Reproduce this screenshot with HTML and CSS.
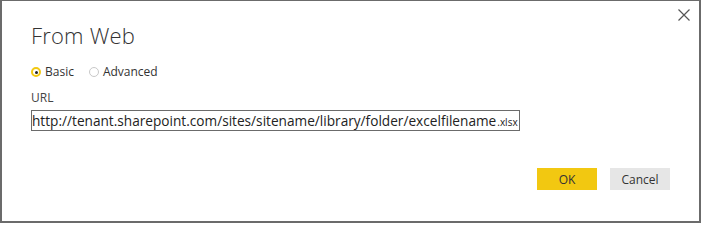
FILE: index.html
```html
<!DOCTYPE html>
<html lang="en">
<head>
<meta charset="utf-8">
<title>From Web</title>
<link rel="stylesheet" href="styles.css">
</head>
<body>
<div class="dialog">
  <button class="close" aria-label="Close">
    <svg width="12" height="12" viewBox="0 0 12 12"><path d="M0.5 0.5 L11.5 11.5 M11.5 0.5 L0.5 11.5" stroke="#555" stroke-width="1.2" fill="none"/></svg>
  </button>
  <h1 class="title">From Web</h1>
  <div class="radios">
    <label class="radio"><span class="dot checked"></span>Basic</label>
    <label class="radio"><span class="dot"></span>Advanced</label>
  </div>
  <div class="label">URL</div>
  <div class="input">http://tenant.sharepoint.com/sites/sitename/library/folder/excelfilename<span class="ext">.xlsx</span></div>
  <div class="actions">
    <button class="btn ok">OK</button>
    <button class="btn cancel">Cancel</button>
  </div>
</div>
</body>
</html>
```
FILE: styles.css
```css
html, body {
  margin: 0;
  padding: 0;
  background: #fff;
}
body {
  width: 701px;
  height: 223px;
  font-family: "Open Sans", "Noto Sans", sans-serif;
  color: #333;
}
.dialog {
  position: relative;
  box-sizing: border-box;
  width: 701px;
  height: 223px;
  border: 2px solid #6b6b6b;
  border-top-width: 1px;
  padding: 19px 29px 0 29px;
}
.close {
  position: absolute;
  top: 8px;
  right: 9px;
  border: 0;
  background: none;
  padding: 0;
  width: 12px;
  height: 12px;
  display: flex;
}
.title {
  margin: 0;
  font-weight: 300;
  font-size: 22px;
  line-height: 30px;
  color: #333;
  letter-spacing: 0.2px;
}
.radios {
  display: flex;
  gap: 15px;
  margin-top: 14px;
  font-size: 12px;
  line-height: 16px;
  color: #333;
}
.radio {
  display: flex;
  align-items: center;
  gap: 4px;
}
.dot {
  box-sizing: border-box;
  width: 10px;
  height: 10px;
  border-radius: 50%;
  border: 1px solid #c8c8c8;
  display: inline-flex;
  align-items: center;
  justify-content: center;
}
.dot.checked {
  border: 2px solid #f2c811;
}
.dot.checked::after {
  content: "";
  width: 3px;
  height: 3px;
  border-radius: 50%;
  background: #222;
}
.label {
  margin-top: 11px;
  font-size: 12px;
  line-height: 14px;
  color: #444;
}
.input {
  box-sizing: border-box;
  width: 489px;
  height: 21px;
  margin-top: 5px;
  border: 1px solid #6b6b6b;
  padding: 0 2px 0 0;
  font-size: 13.65px;
  line-height: 19px;
  color: #222;
  white-space: nowrap;
  overflow: hidden;
}
.ext {
  font-size: 10px;
  margin-left: 1px;
}
.actions {
  display: flex;
  justify-content: flex-end;
  gap: 13px;
  margin-top: 37px;
  margin-right: 0;
}
.btn {
  width: 60px;
  height: 22px;
  border: 0;
  padding: 0;
  font-family: inherit;
  font-size: 12px;
  color: #333;
}
.ok {
  background: #f2c811;
}
.cancel {
  background: #e6e6e6;
}
```
